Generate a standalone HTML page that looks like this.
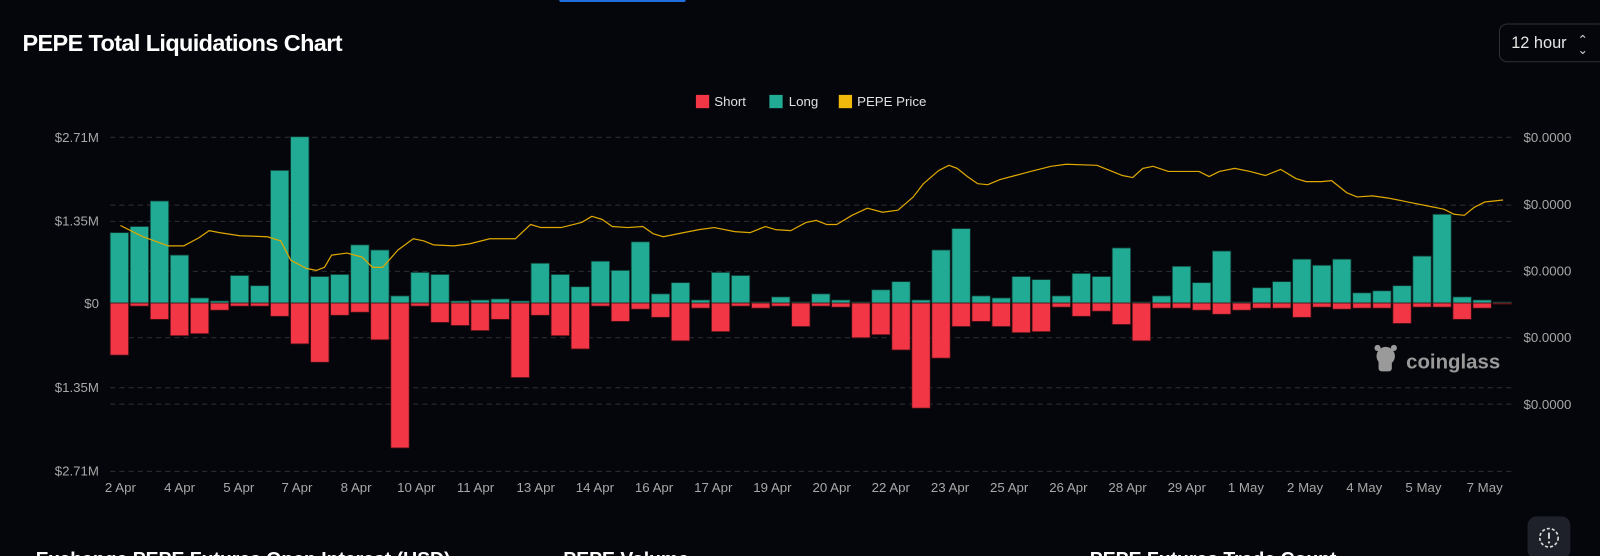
<!DOCTYPE html>
<html><head><meta charset="utf-8"><style>
html,body{margin:0;padding:0;background:#05060b;width:1600px;height:556px;overflow:hidden;font-family:"Liberation Sans",sans-serif}
#w{position:absolute;left:0;top:0;width:1568px;height:545px;overflow:hidden;transform:scale(1.0204);transform-origin:0 0}
.t{position:absolute;left:22px;top:29px;color:#fff;font-weight:bold;font-size:23px;letter-spacing:-0.6px}
.sel{position:absolute;left:1469px;top:23px;width:120px;height:38px;border:1px solid #2d3038;border-radius:8px;color:#e6e6e6;font-size:16px;line-height:38px;padding-left:11px;box-sizing:border-box}
.bt{position:absolute;top:538px;color:#fff;font-weight:bold;font-size:19px}
</style></head><body><div id="w">
<div style="position:absolute;left:548px;top:0;width:124px;height:2px;background:#1f6fe0;border-radius:0 0 3px 3px"></div>
<div class="t">PEPE Total Liquidations Chart</div>
<div class="sel">12 hour <span style="position:absolute;left:76px;top:0;font-size:12px;line-height:10px;padding-top:10px;color:#ccc">&#8963;<br>&#8964;</span></div>
<svg width="1568" height="545" style="position:absolute;left:0;top:0" font-family="Liberation Sans, sans-serif">
<g font-size="13" fill="#e0e0e0">
<rect x="682" y="93" width="13" height="13" fill="#f23645"/><text x="700" y="104">Short</text>
<rect x="754" y="93" width="13" height="13" fill="#22ab94"/><text x="773" y="104">Long</text>
<rect x="822" y="93" width="13" height="13" fill="#f0b90b"/><text x="840" y="104">PEPE Price</text>
</g>
<g stroke="#2e3038" stroke-dasharray="5,4" stroke-width="1">
<line x1="108" x2="1483" y1="134.5" y2="134.5"/><line x1="108" x2="1483" y1="201" y2="201"/><line x1="108" x2="1483" y1="217" y2="217"/><line x1="108" x2="1483" y1="266" y2="266"/><line x1="108" x2="1483" y1="331" y2="331"/><line x1="108" x2="1483" y1="380" y2="380"/><line x1="108" x2="1483" y1="396" y2="396"/><line x1="108" x2="1483" y1="462" y2="462"/>
</g>
<g font-size="13" fill="#a8a8a8" text-anchor="end">
<text x="97" y="139">$2.71M</text><text x="97" y="221">$1.35M</text><text x="97" y="302">$0</text><text x="97" y="384">$1.35M</text><text x="97" y="466">$2.71M</text>
</g>
<g font-size="13" fill="#a8a8a8">
<text x="1493" y="139">$0.0000</text><text x="1493" y="205">$0.0000</text><text x="1493" y="270">$0.0000</text><text x="1493" y="335">$0.0000</text><text x="1493" y="401">$0.0000</text>
</g>
<g fill="#22ab94" stroke="#0e3d36" stroke-width="0.8">
<rect x="108" y="228" width="18" height="69"/><rect x="127.6" y="222" width="18" height="75"/><rect x="147.3" y="197" width="18" height="100"/><rect x="166.9" y="250" width="18" height="47"/><rect x="186.6" y="292" width="18" height="5"/><rect x="206.2" y="295" width="18" height="2"/><rect x="225.8" y="270" width="18" height="27"/><rect x="245.5" y="280" width="18" height="17"/><rect x="265.1" y="167" width="18" height="130"/><rect x="284.8" y="134" width="18" height="163"/><rect x="304.4" y="271" width="18" height="26"/><rect x="324" y="269" width="18" height="28"/><rect x="343.7" y="240" width="18" height="57"/><rect x="363.3" y="245" width="18" height="52"/><rect x="383" y="290" width="18" height="7"/><rect x="402.6" y="267" width="18" height="30"/><rect x="422.2" y="269" width="18" height="28"/><rect x="441.9" y="295" width="18" height="2"/><rect x="461.5" y="294" width="18" height="3"/><rect x="481.2" y="293" width="18" height="4"/><rect x="500.8" y="295" width="18" height="2"/><rect x="520.4" y="258" width="18" height="39"/><rect x="540.1" y="269" width="18" height="28"/><rect x="559.7" y="281" width="18" height="16"/><rect x="579.4" y="256" width="18" height="41"/><rect x="599" y="265" width="18" height="32"/><rect x="618.6" y="237" width="18" height="60"/><rect x="638.3" y="288" width="18" height="9"/><rect x="657.9" y="277" width="18" height="20"/><rect x="677.6" y="294" width="18" height="3"/><rect x="697.2" y="267" width="18" height="30"/><rect x="716.8" y="270" width="18" height="27"/><rect x="736.5" y="296" width="18" height="1"/><rect x="756.1" y="291" width="18" height="6"/><rect x="775.8" y="296" width="18" height="1"/><rect x="795.4" y="288" width="18" height="9"/><rect x="815" y="294" width="18" height="3"/><rect x="834.7" y="296" width="18" height="1"/><rect x="854.3" y="284" width="18" height="13"/><rect x="874" y="276" width="18" height="21"/><rect x="893.6" y="294" width="18" height="3"/><rect x="913.2" y="245" width="18" height="52"/><rect x="932.9" y="224" width="18" height="73"/><rect x="952.5" y="290" width="18" height="7"/><rect x="972.2" y="292" width="18" height="5"/><rect x="991.8" y="271" width="18" height="26"/><rect x="1011.4" y="274" width="18" height="23"/><rect x="1031.1" y="290" width="18" height="7"/><rect x="1050.7" y="268" width="18" height="29"/><rect x="1070.4" y="271" width="18" height="26"/><rect x="1090" y="243" width="18" height="54"/><rect x="1109.6" y="296" width="18" height="1"/><rect x="1129.3" y="290" width="18" height="7"/><rect x="1148.9" y="261" width="18" height="36"/><rect x="1168.6" y="277" width="18" height="20"/><rect x="1188.2" y="246" width="18" height="51"/><rect x="1207.8" y="296" width="18" height="1"/><rect x="1227.5" y="282" width="18" height="15"/><rect x="1247.1" y="276" width="18" height="21"/><rect x="1266.8" y="254" width="18" height="43"/><rect x="1286.4" y="260" width="18" height="37"/><rect x="1306" y="254" width="18" height="43"/><rect x="1325.7" y="287" width="18" height="10"/><rect x="1345.3" y="285" width="18" height="12"/><rect x="1365" y="280" width="18" height="17"/><rect x="1384.6" y="251" width="18" height="46"/><rect x="1404.2" y="210" width="18" height="87"/><rect x="1423.9" y="291" width="18" height="6"/><rect x="1443.5" y="294" width="18" height="3"/><rect x="1463.2" y="296" width="18" height="1"/>
</g>
<g fill="#f23645" stroke="#4a1016" stroke-width="0.8">
<rect x="108" y="297" width="18" height="51"/><rect x="127.6" y="297" width="18" height="3"/><rect x="147.3" y="297" width="18" height="16"/><rect x="166.9" y="297" width="18" height="32"/><rect x="186.6" y="297" width="18" height="30"/><rect x="206.2" y="297" width="18" height="7"/><rect x="225.8" y="297" width="18" height="3"/><rect x="245.5" y="297" width="18" height="3"/><rect x="265.1" y="297" width="18" height="13"/><rect x="284.8" y="297" width="18" height="40"/><rect x="304.4" y="297" width="18" height="58"/><rect x="324" y="297" width="18" height="12"/><rect x="343.7" y="297" width="18" height="9"/><rect x="363.3" y="297" width="18" height="36"/><rect x="383" y="297" width="18" height="142"/><rect x="402.6" y="297" width="18" height="3"/><rect x="422.2" y="297" width="18" height="19"/><rect x="441.9" y="297" width="18" height="22"/><rect x="461.5" y="297" width="18" height="27"/><rect x="481.2" y="297" width="18" height="16"/><rect x="500.8" y="297" width="18" height="73"/><rect x="520.4" y="297" width="18" height="12"/><rect x="540.1" y="297" width="18" height="32"/><rect x="559.7" y="297" width="18" height="45"/><rect x="579.4" y="297" width="18" height="3"/><rect x="599" y="297" width="18" height="18"/><rect x="618.6" y="297" width="18" height="6"/><rect x="638.3" y="297" width="18" height="14"/><rect x="657.9" y="297" width="18" height="37"/><rect x="677.6" y="297" width="18" height="5"/><rect x="697.2" y="297" width="18" height="28"/><rect x="716.8" y="297" width="18" height="3"/><rect x="736.5" y="297" width="18" height="5"/><rect x="756.1" y="297" width="18" height="3"/><rect x="775.8" y="297" width="18" height="23"/><rect x="795.4" y="297" width="18" height="3"/><rect x="815" y="297" width="18" height="4"/><rect x="834.7" y="297" width="18" height="34"/><rect x="854.3" y="297" width="18" height="31"/><rect x="874" y="297" width="18" height="46"/><rect x="893.6" y="297" width="18" height="103"/><rect x="913.2" y="297" width="18" height="54"/><rect x="932.9" y="297" width="18" height="23"/><rect x="952.5" y="297" width="18" height="18"/><rect x="972.2" y="297" width="18" height="23"/><rect x="991.8" y="297" width="18" height="29"/><rect x="1011.4" y="297" width="18" height="28"/><rect x="1031.1" y="297" width="18" height="4"/><rect x="1050.7" y="297" width="18" height="13"/><rect x="1070.4" y="297" width="18" height="8"/><rect x="1090" y="297" width="18" height="21"/><rect x="1109.6" y="297" width="18" height="37"/><rect x="1129.3" y="297" width="18" height="5"/><rect x="1148.9" y="297" width="18" height="5"/><rect x="1168.6" y="297" width="18" height="7"/><rect x="1188.2" y="297" width="18" height="11"/><rect x="1207.8" y="297" width="18" height="7"/><rect x="1227.5" y="297" width="18" height="5"/><rect x="1247.1" y="297" width="18" height="5"/><rect x="1266.8" y="297" width="18" height="14"/><rect x="1286.4" y="297" width="18" height="4"/><rect x="1306" y="297" width="18" height="6"/><rect x="1325.7" y="297" width="18" height="5"/><rect x="1345.3" y="297" width="18" height="5"/><rect x="1365" y="297" width="18" height="20"/><rect x="1384.6" y="297" width="18" height="4"/><rect x="1404.2" y="297" width="18" height="4"/><rect x="1423.9" y="297" width="18" height="16"/><rect x="1443.5" y="297" width="18" height="5"/><rect x="1463.2" y="297" width="18" height="1"/>
</g>
<polyline fill="none" stroke="#dfa800" stroke-width="1.2" stroke-linejoin="round" points="118,221 140,232 165,241 180,241 195,233 205,226 215,228 235,231 262,232 275,236 285,255 300,263 310,265 318,262 325,250 340,248 355,252 365,262 375,262 390,245 405,234 415,236 425,240 445,241 460,239 480,234 505,234 520,220 530,223 550,223 570,218 580,212 590,215 600,222 615,223 630,222 640,229 650,232 670,228 685,225 700,223 720,227 735,228 750,222 760,225 775,226 790,218 800,216 810,220 820,220 835,211 850,204 865,208 880,206 895,193 905,180 920,167 930,162 938,165 948,173 958,180 968,181 980,176 995,172 1010,168 1030,163 1045,161 1075,162 1090,168 1100,172 1110,174 1120,165 1130,163 1145,168 1160,168 1175,168 1185,173 1195,168 1210,165 1225,168 1240,172 1255,166 1270,175 1280,178 1295,178 1305,177 1320,189 1330,193 1345,192 1360,194 1380,198 1400,202 1415,205 1425,210 1435,211 1445,203 1455,198 1473,196"/>
<g font-size="13" fill="#a8a8a8" text-anchor="middle">
<text x="118" y="482">2 Apr</text><text x="176" y="482">4 Apr</text><text x="234" y="482">5 Apr</text><text x="291" y="482">7 Apr</text><text x="349" y="482">8 Apr</text><text x="408" y="482">10 Apr</text><text x="466" y="482">11 Apr</text><text x="525" y="482">13 Apr</text><text x="583" y="482">14 Apr</text><text x="641" y="482">16 Apr</text><text x="699" y="482">17 Apr</text><text x="757" y="482">19 Apr</text><text x="815" y="482">20 Apr</text><text x="873" y="482">22 Apr</text><text x="931" y="482">23 Apr</text><text x="989" y="482">25 Apr</text><text x="1047" y="482">26 Apr</text><text x="1105" y="482">28 Apr</text><text x="1163" y="482">29 Apr</text><text x="1221" y="482">1 May</text><text x="1279" y="482">2 May</text><text x="1337" y="482">4 May</text><text x="1395" y="482">5 May</text><text x="1455" y="482">7 May</text>
</g>
<g fill="#9a9a9a">
<ellipse cx="1358" cy="349" rx="9" ry="9"/><rect x="1351" y="352" width="13" height="12" rx="3"/><circle cx="1350" cy="341" r="3"/><circle cx="1366" cy="341" r="3"/>
<text x="1378" y="361" font-size="20" font-weight="bold" fill="#9a9a9a">coinglass</text>
</g>
</svg>
<div class="bt" style="left:35px">Exchange PEPE Futures Open Interest (USD)</div>
<div class="bt" style="left:552px">PEPE Volume</div>
<div class="bt" style="left:1068px">PEPE Futures Trade Count</div>
<div style="position:absolute;left:1497px;top:506px;width:42px;height:42px;background:#1e2129;border-radius:9px">
<svg width="42" height="42"><circle cx="21" cy="21" r="9" fill="none" stroke="#ddd" stroke-width="1.6" stroke-dasharray="3,2"/><line x1="21" y1="16" x2="21" y2="22" stroke="#ddd" stroke-width="1.8"/><circle cx="21" cy="25.5" r="1.1" fill="#ddd"/></svg>
</div>
</div></body></html>
